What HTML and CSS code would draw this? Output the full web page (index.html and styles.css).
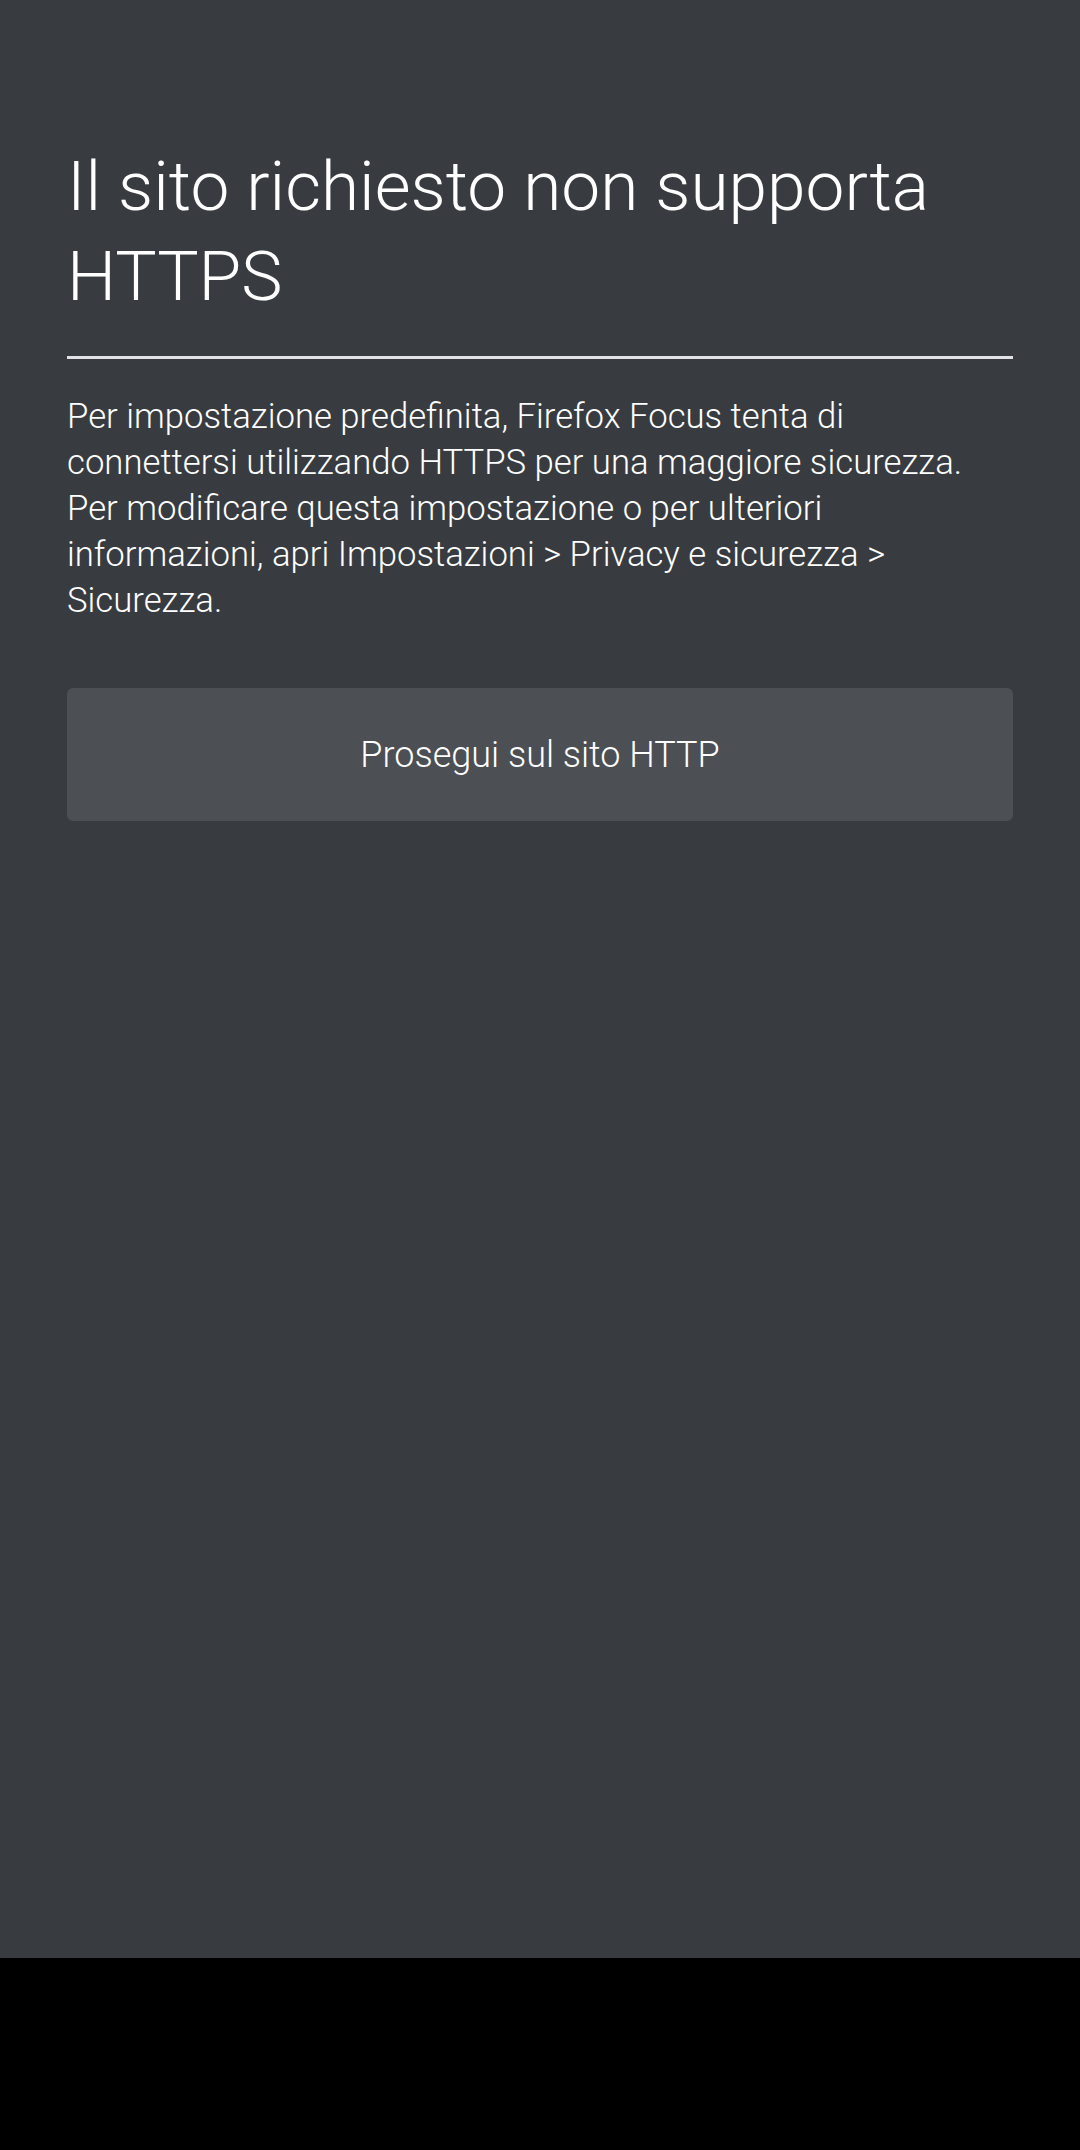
FILE: index.html
```html
<!DOCTYPE html>
<html lang="it">
<head>
<meta charset="utf-8">
<title>Il sito richiesto non supporta HTTPS</title>
<link rel="stylesheet" href="styles.css">
</head>
<body>
<div class="screen">
  <main class="page">
    <h1 class="title">Il sito richiesto non supporta HTTPS</h1>
    <hr class="rule">
    <p class="message">Per impostazione predefinita, Firefox Focus tenta di connettersi utilizzando HTTPS per una maggiore sicurezza. Per modificare questa impostazione o per ulteriori informazioni, apri Impostazioni &gt; Privacy e sicurezza &gt; Sicurezza.</p>
    <button class="continue" type="button">Prosegui sul sito HTTP</button>
  </main>
  <div class="navbar"></div>
</div>
</body>
</html>
```

FILE: styles.css
```css
html, body {
  margin: 0;
  padding: 0;
  background: #000;
}

.screen {
  width: 1080px;
  height: 2150px;
  display: flex;
  flex-direction: column;
}

.page {
  flex: 0 0 1958px;
  box-sizing: border-box;
  background: #383c40;
  padding: 142px 67px 0;
  font-family: Roboto, "Noto Sans", sans-serif;
  font-weight: 300;
  color: #ffffff;
}

.title {
  margin: 0;
  font-size: 69.4px;
  line-height: 90px;
  font-weight: 300;
}

.rule {
  margin: 34px 0 0;
  border: 0;
  height: 3px;
  background: #e2e2e6;
}

.message {
  margin: 34px 0 0;
  font-size: 34.7px;
  line-height: 46px;
  font-weight: 300;
}

.continue {
  display: block;
  width: 100%;
  height: 133px;
  margin: 65px 0 0;
  border: 0;
  border-radius: 6px;
  background: #4c4f54;
  color: #ffffff;
  font-family: Roboto, "Noto Sans", sans-serif;
  font-weight: 300;
  font-size: 36px;
  padding: 0;
}

.navbar {
  flex: 1 1 auto;
  background: #000;
}
```
